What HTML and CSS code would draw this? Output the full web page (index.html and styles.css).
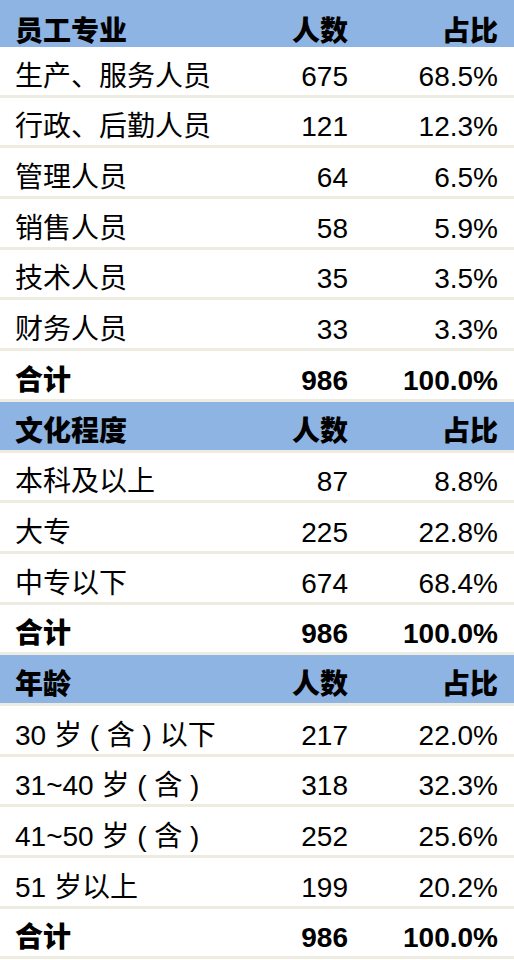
FILE: index.html
```html
<!DOCTYPE html>
<html lang="zh-CN">
<head>
<meta charset="utf-8">
<title>员工构成</title>
<link rel="stylesheet" href="styles.css">
</head>
<body>
<div class="table">
  <div class="row head first"><span class="c1">员工专业</span><span class="c2">人数</span><span class="c3">占比</span></div>
  <div class="row"><span class="c1">生产、服务人员</span><span class="c2">675</span><span class="c3">68.5%</span></div>
  <div class="row"><span class="c1">行政、后勤人员</span><span class="c2">121</span><span class="c3">12.3%</span></div>
  <div class="row"><span class="c1">管理人员</span><span class="c2">64</span><span class="c3">6.5%</span></div>
  <div class="row"><span class="c1">销售人员</span><span class="c2">58</span><span class="c3">5.9%</span></div>
  <div class="row"><span class="c1">技术人员</span><span class="c2">35</span><span class="c3">3.5%</span></div>
  <div class="row"><span class="c1">财务人员</span><span class="c2">33</span><span class="c3">3.3%</span></div>
  <div class="row total"><span class="c1">合计</span><span class="c2">986</span><span class="c3">100.0%</span></div>
  <div class="row head"><span class="c1">文化程度</span><span class="c2">人数</span><span class="c3">占比</span></div>
  <div class="row"><span class="c1">本科及以上</span><span class="c2">87</span><span class="c3">8.8%</span></div>
  <div class="row"><span class="c1">大专</span><span class="c2">225</span><span class="c3">22.8%</span></div>
  <div class="row"><span class="c1">中专以下</span><span class="c2">674</span><span class="c3">68.4%</span></div>
  <div class="row total"><span class="c1">合计</span><span class="c2">986</span><span class="c3">100.0%</span></div>
  <div class="row head"><span class="c1">年龄</span><span class="c2">人数</span><span class="c3">占比</span></div>
  <div class="row"><span class="c1">30 岁 ( 含 ) 以下</span><span class="c2">217</span><span class="c3">22.0%</span></div>
  <div class="row"><span class="c1">31~40 岁 ( 含 )</span><span class="c2">318</span><span class="c3">32.3%</span></div>
  <div class="row"><span class="c1">41~50 岁 ( 含 )</span><span class="c2">252</span><span class="c3">25.6%</span></div>
  <div class="row"><span class="c1">51 岁以上</span><span class="c2">199</span><span class="c3">20.2%</span></div>
  <div class="row total"><span class="c1">合计</span><span class="c2">986</span><span class="c3">100.0%</span></div>
</div>
</body>
</html>
```
FILE: styles.css
```css
html, body {
  margin: 0;
  padding: 0;
  background: #ffffff;
}

.table {
  width: 514px;
  font-family: "Liberation Sans", "Noto Sans CJK SC", sans-serif;
  font-size: 28px;
  color: #000000;
}

.row {
  display: grid;
  grid-template-columns: 1fr 120px 150px;
  align-items: end;
  box-sizing: border-box;
  height: 50.7px;
  padding: 0 16px 2px 15px;
  border-bottom: 3px solid #eeece1;
  line-height: 32px;
  white-space: nowrap;
}

.row.first {
  height: 47px;
  border-bottom: none;
  padding-bottom: 0;
  line-height: 30px;
}

.head {
  background: #8db4e2;
  font-weight: 900;
}

.total {
  font-weight: 900;
}

.c2, .c3 {
  text-align: right;
}
```
